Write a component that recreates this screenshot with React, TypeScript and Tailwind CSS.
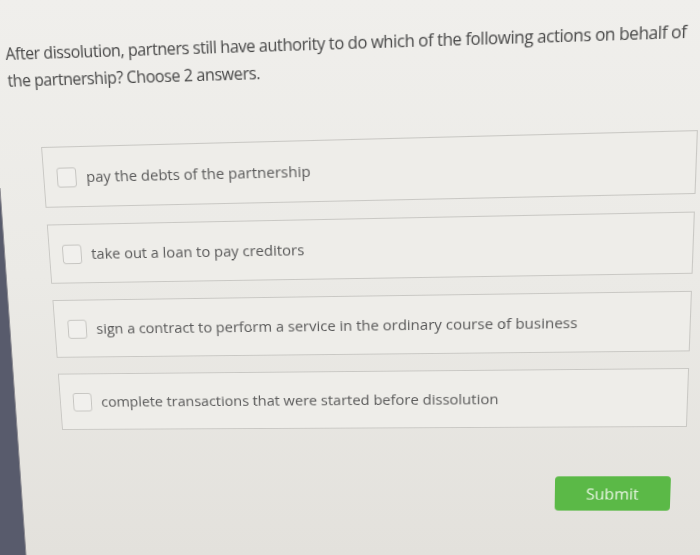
import React from "react";

// the page was photographed at a slight angle: map the flat layout onto the photo
function warp(src: number[][], dst: number[][]) {
  const A: number[][] = [];
  const b: number[] = [];
  for (let i = 0; i < 4; i++) {
    const [x, y] = src[i];
    const [u, v] = dst[i];
    A.push([x, y, 1, 0, 0, 0, -u * x, -u * y]);
    b.push(u);
    A.push([0, 0, 0, x, y, 1, -v * x, -v * y]);
    b.push(v);
  }
  for (let c = 0; c < 8; c++) {
    let p = c;
    for (let r = c + 1; r < 8; r++) if (Math.abs(A[r][c]) > Math.abs(A[p][c])) p = r;
    [A[c], A[p]] = [A[p], A[c]];
    [b[c], b[p]] = [b[p], b[c]];
    for (let r = 0; r < 8; r++) {
      if (r === c) continue;
      const f = A[r][c] / A[c][c];
      for (let k = c; k < 8; k++) A[r][k] -= f * A[c][k];
      b[r] -= f * b[c];
    }
  }
  const [a, bb, c, d, e, f, g, h] = b.map((v, i) => v / A[i][i]);
  return `matrix3d(${a},${d},0,${g},${bb},${e},0,${h},0,0,1,0,${c},${f},0,1)`;
}

const transform = warp(
  [
    [50, 137],
    [692, 137],
    [50, 432],
    [692, 432],
  ],
  [
    [41, 146],
    [698, 129],
    [62, 429],
    [687, 426],
  ]
);

const answers = [
  "pay the debts of the partnership",
  "take out a loan to pay creditors",
  "sign a contract to perform a service in the ordinary course of business",
  "complete transactions that were started before dissolution",
];

export default function App() {
  return (
    <div className="relative w-[700px] h-[555px] overflow-hidden bg-gradient-to-b from-[#f0efec] via-[#ebeae6] to-[#e3e1dc] font-['Open_Sans',sans-serif]">
      <div className="w-[700px] h-[555px] origin-top-left" style={{ transform }}>
        <p className="pt-[33px] pl-[21px] pr-[2px] text-[16px] leading-[26px] tracking-[-0.42px] text-[#474747]">
          After dissolution, partners still have authority to do which of the following actions on behalf of the partnership? Choose 2 answers.
        </p>

        <div className="mt-[53px] ml-[50px] w-[642px] flex flex-col gap-[17px]">
          {answers.map((a) => (
            <label
              key={a}
              className="h-[61px] flex items-center pl-[13px] border border-[#c9c8c4] bg-[#eeede9]"
            >
              <span className="w-5 h-5 shrink-0 rounded-[3px] border-[1.5px] border-[#c6c5c1] bg-[#f1f0ed]" />
              <span className="ml-[10px] text-[15px] text-[#595959]">{a}</span>
            </label>
          ))}
        </div>

        <div className="flex justify-end pr-[22px] mt-[52px]">
          <button className="w-[116px] h-[37px] rounded-[4px] bg-[#5bb947] text-[16px] text-[#eaf6e4]">
            Submit
          </button>
        </div>
      </div>

      {/* edge of the monitor bezel */}
      <svg className="absolute inset-0 pointer-events-none" width="700" height="555">
        <polygon points="0,188 26,555 0,555" fill="#585b6c" />
        <line x1="0" y1="188" x2="26" y2="555" stroke="#8d8c92" strokeWidth="1" />
      </svg>
    </div>
  );
}
